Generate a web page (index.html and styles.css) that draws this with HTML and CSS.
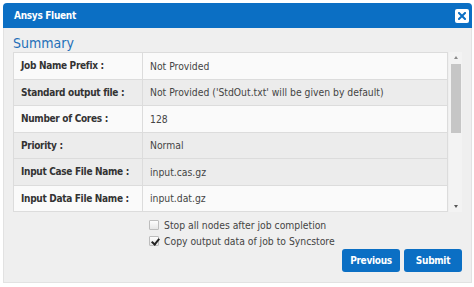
FILE: index.html
```html
<!DOCTYPE html>
<html lang="en">
<head>
  <meta charset="UTF-8">
  <title>Ansys Fluent</title>
  <meta name="viewport" content="width=device-width, initial-scale=1.0">
  <link rel="stylesheet" href="styles.css">
</head>
<body>
  <div class="dialog">
    <div class="dialog-header">
      <span class="dialog-title">Ansys Fluent</span>
      <button class="close-btn" title="Close">
        <svg width="8" height="8" viewBox="0 0 8 8">
          <path d="M1 1 L7 7 M7 1 L1 7" stroke="#0b6fc4" stroke-width="2" stroke-linecap="square"/>
        </svg>
      </button>
    </div>

    <div class="dialog-body">
      <h3 class="section-title">Summary</h3>

      <div class="summary-wrap">
        <div class="summary-scroll">
          <table class="summary-table">
            <tr class="light"><td class="key">Job Name Prefix :</td><td>Not Provided</td></tr>
            <tr class="dark"><td class="key">Standard output file :</td><td>Not Provided ('StdOut.txt' will be given by default)</td></tr>
            <tr class="light"><td class="key">Number of Cores :</td><td>128</td></tr>
            <tr class="dark"><td class="key">Priority :</td><td>Normal</td></tr>
            <tr class="dark"><td class="key">Input Case File Name :</td><td>input.cas.gz</td></tr>
            <tr class="light"><td class="key">Input Data File Name :</td><td>input.dat.gz</td></tr>
          </table>
        </div>
        <div class="scrollbar">
          <span class="arrow arrow-up"></span>
          <div class="track"><div class="thumb"></div></div>
          <span class="arrow arrow-down"></span>
        </div>
      </div>

      <div class="options">
        <label class="option"><input type="checkbox"> Stop all nodes after job completion</label>
        <label class="option"><input type="checkbox" checked> Copy output data of job to Syncstore</label>
      </div>

      <div class="actions">
        <button class="btn">Previous</button>
        <button class="btn">Submit</button>
      </div>
    </div>
  </div>
</body>
</html>
```

FILE: styles.css
```css
body {
  margin: 0;
  background: #fff;
  font-family: "DejaVu Sans Condensed", "DejaVu Sans", sans-serif;
  font-size: 10.3px;
  color: #444;
}
.dialog {
  width: 469px;
  margin: 3px 0 0 3px;
  border-radius: 4px 4px 0 0;
  overflow: hidden;
}
.dialog-header {
  height: 25px;
  background: #0b6fc4;
  display: flex;
  align-items: center;
  justify-content: space-between;
  padding: 0 3px 0 11px;
}
.dialog-title {
  color: #fff;
  font-weight: bold;
  font-size: 10px;
  letter-spacing: -0.3px;
}
.close-btn {
  width: 14px;
  height: 14px;
  padding: 0;
  border: none;
  background: #fff;
  border-radius: 2px;
  display: flex;
  align-items: center;
  justify-content: center;
  cursor: pointer;
}
.dialog-body {
  background: #efefef;
  border: 1px solid #e2e2e2;
  border-top: none;
  padding: 6px 9px 10px 9px;
}
.section-title {
  margin: 0;
  font-weight: normal;
  font-size: 14px;
  line-height: 18px;
  color: #1f6fb8;
}
.summary-wrap {
  display: flex;
  gap: 1px;
}
.summary-scroll {
  width: 435px;
  height: 160px;
  overflow: hidden;
}
.summary-table {
  width: 100%;
  border-collapse: collapse;
  border: 1px solid #dcdcdc;
}
.summary-table td {
  height: 25.5px;
  padding: 0 7px;
  border-top: 1px solid #dcdcdc;
  white-space: nowrap;
}
.summary-table td.key {
  width: 114px;
  font-size: 10px;
  letter-spacing: -0.3px;
  font-weight: bold;
  color: #333;
  border-right: 1px solid #dcdcdc;
}
.summary-table tr.light { background: #fafafa; }
.summary-table tr.dark { background: #ececec; }

.scrollbar {
  width: 13px;
  height: 160px;
  background: #f3f3f3;
  display: flex;
  flex-direction: column;
  align-items: center;
}
.arrow {
  width: 0;
  height: 0;
  border-left: 2.5px solid transparent;
  border-right: 2.5px solid transparent;
  margin: 4px 0;
}
.arrow-up { border-bottom: 3px solid #8a8a8a; }
.arrow-down { border-top: 3px solid #555; }
.track {
  flex: 1;
  width: 100%;
  display: flex;
  justify-content: center;
}
.thumb {
  width: 10px;
  height: 69px;
  margin-top: 1px;
  background: #c6c6c6;
}
.options {
  margin-top: 5px;
  padding-left: 136px;
  display: flex;
  flex-direction: column;
}
.option {
  display: flex;
  align-items: center;
  gap: 5px;
  height: 16px;
  color: #444;
}
.option input {
  appearance: none;
  -webkit-appearance: none;
  margin: 0;
  width: 10px;
  height: 10px;
  border: 1px solid #bdbdbd;
  border-radius: 1px;
  background: linear-gradient(#fdfdfd, #e6e6e6);
  position: relative;
}
.option input:checked::after {
  content: "";
  position: absolute;
  left: 3px;
  top: 0;
  width: 3px;
  height: 6px;
  border-right: 2px solid #222;
  border-bottom: 2px solid #222;
  transform: rotate(40deg);
}
.actions {
  display: flex;
  justify-content: flex-end;
  gap: 4px;
}
.btn {
  height: 23px;
  min-width: 58px;
  padding: 0 8px;
  border: none;
  border-radius: 3px;
  background: #0b6fc4;
  color: #fff;
  font-family: inherit;
  font-size: 10px;
  letter-spacing: -0.3px;
  font-weight: bold;
  cursor: pointer;
}
```
